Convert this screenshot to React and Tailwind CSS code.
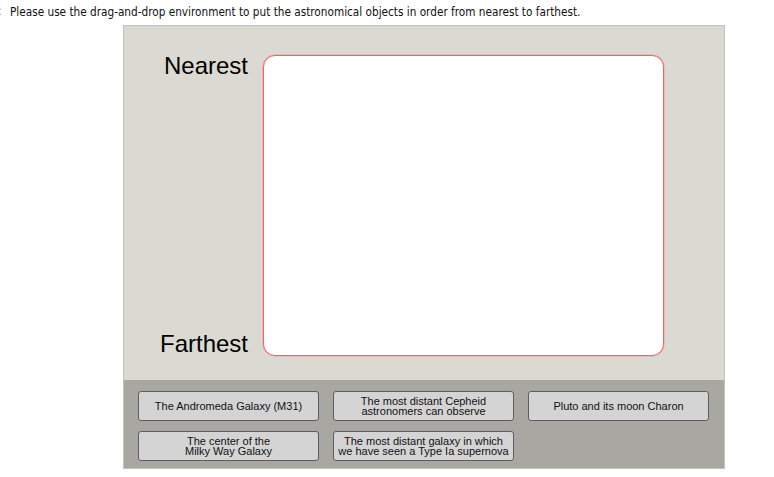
const items = [
  ["The Andromeda Galaxy (M31)"],
  ["The most distant Cepheid", "astronomers can observe"],
  ["Pluto and its moon Charon"],
  ["The center of the", "Milky Way Galaxy"],
  ["The most distant galaxy in which", "we have seen a Type Ia supernova"],
];

const Chip = ({ lines }) => (
  <div className="h-[30px] w-[181px] flex flex-col items-center justify-center bg-[#d4d4d4] border border-[#5e5e5e] rounded-[3px] text-[11px] leading-[10px] text-[#111] text-center font-['Liberation_Sans',Arial,sans-serif]">
    {lines.map((l) => (
      <span key={l}>{l}</span>
    ))}
  </div>
);

const App = () => {
  return (
    <div className="w-[774px] h-[477px] bg-white relative overflow-hidden">
      <div className="h-[25px] flex items-center pl-[10px] pt-[1px] text-[11.7px] text-[#111] font-['DejaVu_Sans_Condensed','DejaVu_Sans',sans-serif]">
        <span className="absolute left-[-2px] top-[3px] text-[#d00]">:</span>
        Please use the drag-and-drop environment to put the astronomical objects in order from nearest to farthest.
      </div>
      <div className="ml-[123px] w-[602px] border border-[#c2c2c2]">
        <div className="bg-[#dadad3] flex pt-[29px] pb-[24px]">
          <div className="w-[139px] pr-[15px] flex flex-col justify-between items-end text-[24px] leading-[24px] text-black font-['Liberation_Sans',Arial,sans-serif]">
            <span className="-mt-[1px]">Nearest</span>
            <span>Farthest</span>
          </div>
          <div className="w-[401px] h-[301px] bg-white border border-[#f26464] rounded-[12px] shadow-[0_0_0_0.5px_#f5a0a0]" />
        </div>
        <div className="bg-[#a8a7a2] pl-[14px] pt-[11px] pb-[7px] grid grid-cols-[181px_181px_181px] gap-x-[14px] gap-y-[10px]">
          {items.map((lines) => (
            <Chip key={lines[0]} lines={lines} />
          ))}
        </div>
      </div>
    </div>
  );
};

export default App;
